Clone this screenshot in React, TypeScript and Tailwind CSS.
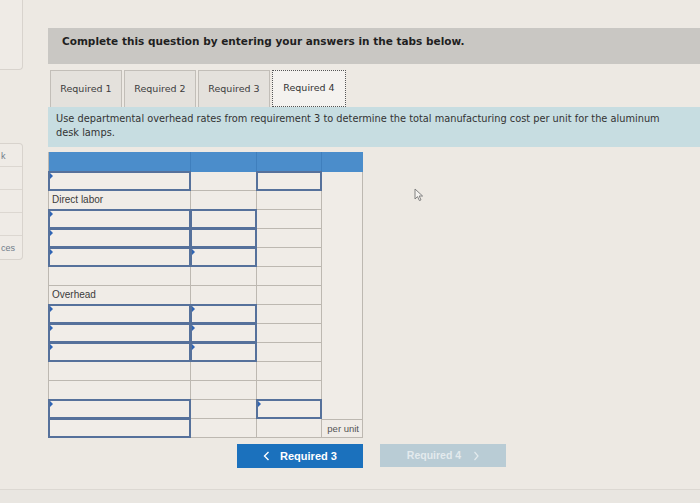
import React from 'react';

type Cell = '' | 'in' | 'inm' | string;

const rows: Cell[][] = [
  ['inm', '', 'in'],
  ['Direct labor', '', ''],
  ['inm', 'in', ''],
  ['inm', 'in', ''],
  ['inm', 'inm', ''],
  ['', '', ''],
  ['Overhead', '', ''],
  ['inm', 'inm', ''],
  ['inm', 'inm', ''],
  ['inm', 'inm', ''],
  ['', '', ''],
  ['', '', ''],
  ['inm', '', 'inm'],
  ['in', '', ''],
];

const widths = ['w-[142px]', 'w-[66px]', 'w-[65px]'];

function TableCell({ value, width }: { value: Cell; width: string }) {
  const isInput = value === 'in' || value === 'inm';
  return (
    <div className={`${width} h-full border-r border-b border-[#bdb8b1] relative`}>
      {isInput ? (
        <div className="absolute inset-[-1px] border-2 border-[#56719b] bg-[#f1ede8]">
          {value === 'inm' && (
            <div className="absolute left-0 top-0 w-0 h-0 border-t-[3px] border-b-[3px] border-l-[3px] border-t-transparent border-b-transparent border-l-[#2f64b3]" />
          )}
        </div>
      ) : value ? (
        <span className="block pl-[3px] pt-[3px] text-[10px] leading-[12px] text-[#3b3b3b]">{value}</span>
      ) : null}
    </div>
  );
}

function Tab({ label, active, w }: { label: string; active?: boolean; w: string }) {
  return (
    <div
      className={
        active
          ? `${w} h-[37px] flex items-center justify-center bg-[#f4f2ef] border border-dotted border-[#555] text-[#333]`
          : `${w} h-[37px] flex items-center justify-center bg-[#e4e1dc] border border-[#c2beb8] border-b-0 text-[#3c3c3c]`
      }
      style={{ fontFamily: '"DejaVu Sans", sans-serif' }}
    >
      <span className="text-[9.5px]">{label}</span>
    </div>
  );
}

export default function App() {
  return (
    <div className="w-[700px] h-[503px] bg-[#ede9e3] flex relative overflow-hidden" style={{ fontFamily: '"Liberation Sans", Arial, sans-serif' }}>
      {/* left sidebar sliver */}
      <div className="w-[23px] shrink-0 flex flex-col">
        <div className="h-[70px] border-r border-b border-[#d8d3cd] rounded-br-[4px] bg-[#efebe6]" />
        <div className="mt-[73px] border-r border-t border-b border-[#d8d3cd] rounded-r-[4px] bg-[#efebe6] text-[9px] text-[#6f7c8a]">
          <div className="h-[23px] border-b border-[#dcd7d1] pl-[1px] pt-[6px]">k</div>
          <div className="h-[23px] border-b border-[#dcd7d1]" />
          <div className="h-[23px] border-b border-[#dcd7d1]" />
          <div className="h-[23px] border-b border-[#dcd7d1]" />
          <div className="h-[23px] pl-[1px] pt-[6px]">ces</div>
        </div>
      </div>

      <div className="flex-1 pl-[25px] pt-[28px] flex flex-col">
        <div className="h-[36px] bg-[#c9c7c3] pl-[14px] pt-[6px]">
          <p className="text-[10.5px] leading-[14px] font-bold text-[#1f1f1f]" style={{ fontFamily: '"DejaVu Sans", sans-serif' }}>
            Complete this question by entering your answers in the tabs below.
          </p>
        </div>

        <div className="mt-[6px] flex gap-[2px] pl-[2px]">
          <Tab label="Required 1" w="w-[72px]" />
          <Tab label="Required 2" w="w-[72px]" />
          <Tab label="Required 3" w="w-[72px]" />
          <Tab label="Required 4" w="w-[74px]" active />
        </div>

        <div className="h-[40px] bg-[#c7dde1] pl-[8px] pt-[5px] pr-[20px]">
          <p className="text-[9.8px] leading-[14px] text-[#333]" style={{ fontFamily: '"DejaVu Sans", sans-serif' }}>
            Use departmental overhead rates from requirement 3 to determine the total manufacturing cost per unit for the aluminum desk lamps.
          </p>
        </div>

        {/* table */}
        <div className="mt-[5px] w-[315px] border-l border-[#bdb8b1]">
          <div className="flex h-[20px] bg-[#4b8dcb]">
            <div className="w-[142px] border-r border-[#3f7fbd]" />
            <div className="w-[66px] border-r border-[#3f7fbd]" />
            <div className="w-[65px] border-r border-[#3f7fbd]" />
            <div className="flex-1" />
          </div>
          <div className="flex bg-[#f0ece7]">
            <div className="flex flex-col">
              {rows.map((r, i) => (
                <div key={i} className="flex h-[19px]">
                  {r.map((c, j) => (
                    <TableCell key={j} value={c} width={widths[j]} />
                  ))}
                </div>
              ))}
            </div>
            <div className="flex-1 flex flex-col border-r border-[#bdb8b1]">
              <div className="flex-1" />
              <div className="h-[19px] border-t border-b border-[#bdb8b1] text-right pr-[3px] pt-[3px] text-[9.5px] leading-[12px] text-[#555]">
                per unit
              </div>
            </div>
          </div>
        </div>

        <div className="mt-[6px] flex gap-[17px] pl-[189px]">
          <button className="w-[126px] h-[24px] bg-[#1b71bd] text-white text-[11px] font-bold flex items-center justify-center gap-[10px]">
            <svg width="7" height="10" viewBox="0 0 7 10" fill="none"><path d="M5.5 1 L1.5 5 L5.5 9" stroke="white" strokeWidth="1.4" /></svg>
            <span>Required 3</span>
          </button>
          <button className="w-[126px] h-[23px] bg-[#b9ccd5] text-[#e3eaed] text-[10.5px] font-bold flex items-center justify-center gap-[12px]">
            <span>Required 4</span>
            <svg width="6" height="10" viewBox="0 0 6 10" fill="none"><path d="M1.5 1 L5 5 L1.5 9" stroke="#e3eaed" strokeWidth="1.2" /></svg>
          </button>
        </div>
      </div>

      {/* bottom strip */}
      <div className="absolute left-0 right-0 bottom-0 h-[14px] border-t border-[#dcd8d2] bg-[#e9e6e1]" />

      {/* mouse pointer */}
      <svg className="absolute left-[414px] top-[188px]" width="11" height="14" viewBox="0 0 11 14">
        <path d="M1 1 L1 11 L3.5 8.6 L5.4 12.6 L7 11.9 L5.2 8 L8.6 8 Z" fill="#f4f2ef" stroke="#777" strokeWidth="0.9" />
      </svg>
    </div>
  );
}
